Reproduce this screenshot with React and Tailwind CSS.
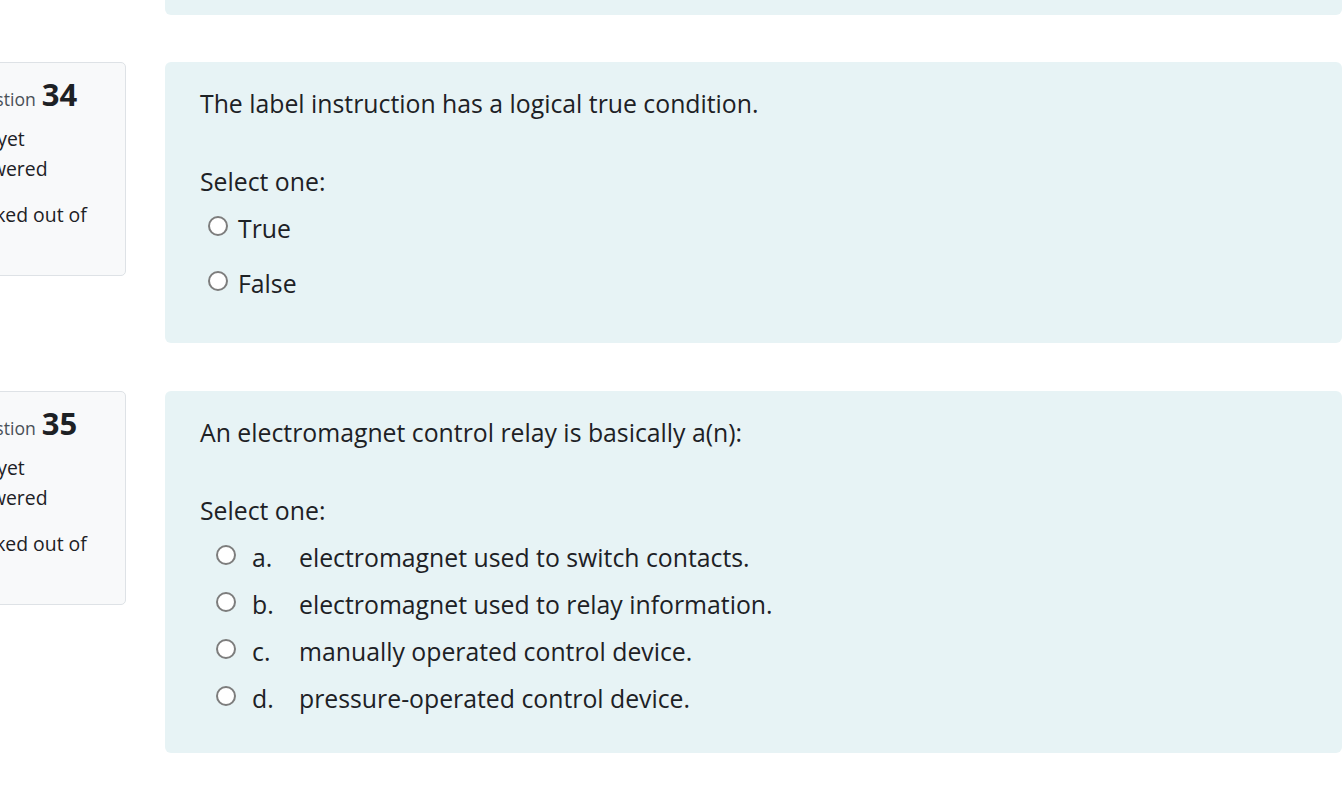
import React from "react";

const FONT = { fontFamily: '"Segoe UI", "Open Sans", "Noto Sans", sans-serif' };

function Radio({ className = "" }) {
  return (
    <span
      className={
        "inline-block w-[20px] h-[20px] rounded-full border-2 border-[#7d7d7d] bg-white shrink-0 " +
        className
      }
    />
  );
}

function Info({ no }) {
  return (
    <div className="ml-[-55px] w-[181px] shrink-0 bg-[#f8f9fa] border border-[#dee2e6] rounded-[5px] pl-[15px] pr-[24px] pt-[12px] pb-[15px] text-[#1d2125]">
      <h3 className="flex items-baseline leading-[38px] m-0">
        <span className="text-[17.6px] text-[#495057]">Question</span>
        <span className="ml-[6px] text-[31px] font-bold">{no}</span>
      </h3>
      <div className="mt-[6px] text-[19.4px] leading-[30px] -ml-[2px]">Not yet answered</div>
      <div className="mt-[16px] text-[19.4px] leading-[30px] -ml-[2px]">Marked out of 1.00</div>
    </div>
  );
}

function Content({ children }) {
  return (
    <div className="flex-1 bg-[#e7f3f5] rounded-[6px] pt-[24px] pl-[35px] pb-[32px] text-[#1d2125] text-[24.8px]">
      {children}
    </div>
  );
}

export default function App() {
  return (
    <div className="w-[1342px] h-[785px] overflow-hidden bg-white" style={FONT}>
      <div className="ml-[165px] mt-[-20px] h-[35px] bg-[#e7f3f5] rounded-[6px]" />

      <div className="flex items-start gap-[39px] mt-[47px]">
        <Info no="34" />
        <Content>
          <p className="leading-[34px]">The label instruction has a logical true condition.</p>
          <p className="mt-[44px] leading-[34px]">Select one:</p>
          <div className="mt-[2.5px]">
            {["True", "False"].map((t) => (
              <div key={t} className="h-[55px] flex items-center">
                <Radio className="ml-[8px] mt-[-4px]" />
                <span className="ml-[10px] leading-[34px]">{t}</span>
              </div>
            ))}
          </div>
        </Content>
      </div>

      <div className="flex items-start gap-[39px] mt-[48px]">
        <Info no="35" />
        <Content>
          <p className="leading-[34px]">An electromagnet control relay is basically a(n):</p>
          <p className="mt-[44px] leading-[34px]">Select one:</p>
          <div className="mt-[6.5px]">
            {[
              ["a.", "electromagnet used to switch contacts."],
              ["b.", "electromagnet used to relay information."],
              ["c.", "manually operated control device."],
              ["d.", "pressure-operated control device."],
            ].map(([l, t]) => (
              <div key={l} className="h-[47px] flex items-center">
                <Radio className="ml-[16px] mt-[-4px]" />
                <span className="ml-[16px] w-[47px] leading-[34px]">{l}</span>
                <span className="leading-[34px]">{t}</span>
              </div>
            ))}
          </div>
        </Content>
      </div>
    </div>
  );
}
